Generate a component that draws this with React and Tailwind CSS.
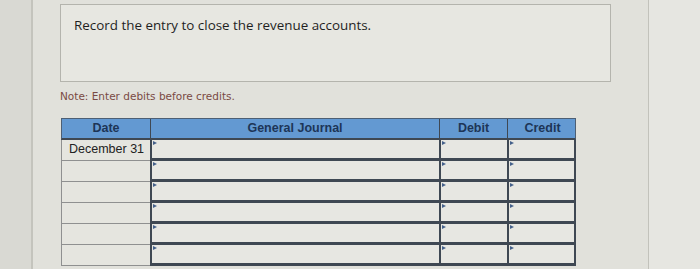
import React from 'react';

const rows = ['December 31', '', '', '', '', ''];

function Marker() {
    return (
        <span className="absolute top-[1px] left-[1px] w-0 h-0 border-y-[2.5px] border-y-transparent border-l-[4px] border-l-[#44608a]" />
    );
}

function InputCell({ last }) {
    return (
        <div className={`relative bg-[#e7e7e2] border-l-2 border-b-[3px] border-[#3f4853] ${last ? 'border-r-2' : ''}`}>
            <Marker />
        </div>
    );
}

export default function App() {
    return (
        <div className="w-[700px] h-[269px] flex bg-[#e1e1db] overflow-hidden" style={{ fontFamily: '"Open Sans", sans-serif' }}>
            {/* left bezel strip */}
            <div className="w-[33px] h-full bg-[#d9d9d3] border-r-2 border-[#c4c4bd]" />

            <div className="flex-1 pl-[27px] pt-[4px]">
                {/* question box */}
                <div className="w-[551px] h-[78px] bg-[#e7e7e1] border border-[#b4b4ad] pl-[13px] pt-[10px]">
                    <p className="text-[13.4px] text-[#1f1f1f]">Record the entry to close the revenue accounts.</p>
                </div>

                <p className="mt-[7px] text-[10.5px] text-[#7a4a44]" style={{ fontFamily: '"DejaVu Sans", sans-serif' }}>
                    Note: Enter debits before credits.
                </p>

                {/* journal table */}
                <div className="mt-[13px] ml-[1px] w-[515px]" style={{ fontFamily: '"Liberation Sans", Arial, sans-serif' }}>
                    <div className="grid grid-cols-[89px_289px_68px_69px] h-[22px] bg-[#6399d2] border border-[#4d5f74] border-b-2 border-b-[#3f4853] text-[12.5px] font-bold text-[#1d3557]">
                        <div className="flex items-center justify-center border-r border-[#3f4853]">Date</div>
                        <div className="flex items-center justify-center border-r border-[#3f4853]">General Journal</div>
                        <div className="flex items-center justify-center border-r border-[#3f4853]">Debit</div>
                        <div className="flex items-center justify-center">Credit</div>
                    </div>
                    {rows.map((d, i) => (
                        <div key={i} className="grid grid-cols-[89px_289px_68px_69px] h-[21px]">
                            <div className="flex items-center pl-[7px] bg-[#e5e5df] border-l border-b border-[#8f9090] text-[12.5px] text-[#222]">
                                {d}
                            </div>
                            <InputCell />
                            <InputCell />
                            <InputCell last />
                        </div>
                    ))}
                </div>
            </div>

            {/* right bezel strip */}
            <div className="w-[52px] h-full bg-[#e6e6e1] border-l border-[#c2c2bb]" />
        </div>
    );
}
